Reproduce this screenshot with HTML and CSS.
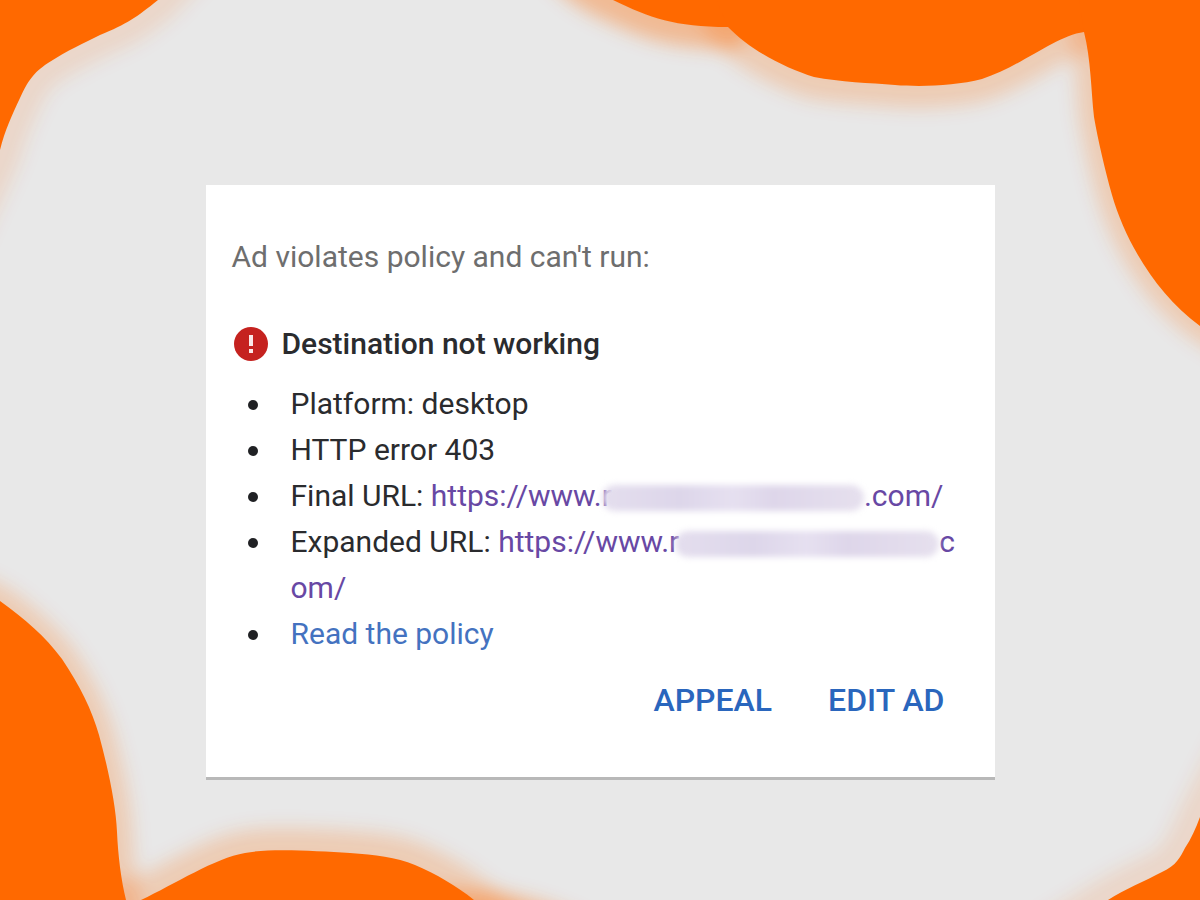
FILE: index.html
```html
<!DOCTYPE html>
<html lang="en">
<head>
    <meta charset="UTF-8">
    <meta name="viewport" content="width=device-width, initial-scale=1.0">
    <title>Ad policy violation</title>
    <link rel="stylesheet" href="styles.css">
</head>
<body>
    <svg class="backdrop" viewBox="0 0 1200 900" preserveAspectRatio="none" aria-hidden="true">
        <defs>
            <filter id="soften" filterUnits="userSpaceOnUse" x="-100" y="-100" width="1400" height="1100">
                <feGaussianBlur stdDeviation="9" />
            </filter>
            <path id="top-left" d="M-60 -60V300C-40 230 -15 190 0 150C5 130 12 115 20 98C28 81 33 73 48 63C68 50 84 43 100 35C127 24 137 17 158 0L215 -60Z" />
            <path id="top-small" d="M540 -60C575 -20 590 -10 613 0C650 18 675 27 728 27L760 -60Z" />
            <path id="top" d="M690 -60L728 27C750 50 785 68 814 77C840 82 870 83 895 85C920 87 955 86 982 79C1020 67 1055 36 1084 32L1120 -60Z" />
            <path id="right" d="M1070 -60L1084 32C1091 60 1091 90 1094 117C1098 140 1105 170 1112 195C1125 240 1155 293 1200 326L1270 370V-60Z" />
            <path id="bottom-left" d="M-60 570L0 601C25 619 45 636 62 659C80 686 92 710 99 735C108 768 116 805 117 832C118 855 121 880 126 900L140 960H-60Z" />
            <path id="bottom" d="M60 960L126 900H141C175 884 215 858 245 853C270 848 315 851 350 853C375 855 396 857 415 865C436 874 457 886 474 900L550 960Z" />
            <path id="bottom-right" d="M1010 960L1108 900C1125 889 1145 881 1162 872C1176 866 1181 856 1185 848C1191 839 1196 828 1200 817L1260 700V960Z" />
        </defs>
        <g class="glow" filter="url(#soften)">
            <use class="glow-light" href="#top-left" />
            <use class="glow-strong" href="#top-small" />
            <use href="#top" />
            <use class="glow-narrow" href="#right" />
            <use class="glow-narrow" href="#bottom-left" />
            <use href="#bottom" />
            <path class="glow-strong" d="M440 912C500 908 560 925 610 960H440Z" />
            <use class="glow-light" href="#bottom-right" />
        </g>
        <g class="shapes">
            <use href="#top-left" />
            <use href="#top-small" />
            <use href="#top" />
            <use href="#right" />
            <use href="#bottom-left" />
            <use href="#bottom" />
            <use href="#bottom-right" />
        </g>
    </svg>

    <main class="card">
        <p class="intro">Ad violates policy and can't run:</p>

        <h1 class="title">
            <svg class="error-icon" viewBox="0 0 34 34" aria-hidden="true">
                <circle cx="17" cy="17" r="17" fill="#c5221f" />
                <path d="M15 8h4v11h-4zM15 22h4v4h-4z" fill="#fbe9e8" />
            </svg>
            Destination not working
        </h1>

        <ul class="details">
            <li>Platform: desktop</li>
            <li>HTTP error 403</li>
            <li>Final URL: <a class="visited" href="#">https://www.r<span class="redacted"></span>.com/</a></li>
            <li>Expanded URL: <a class="visited" href="#">https://www.r<span class="redacted redacted-wide"></span>com/</a></li>
            <li><a class="policy" href="#">Read the policy</a></li>
        </ul>

        <div class="actions">
            <button type="button">APPEAL</button>
            <button type="button">EDIT AD</button>
        </div>
    </main>
</body>
</html>
```
FILE: styles.css
```css
body {
    font-family: Roboto, Arial, sans-serif;
    font-size: 30px;
    line-height: 46px;
    background-color: #e8e8e8;
    color: #2a2b2e;
    display: flex;
    justify-content: center;
    align-items: center;
    min-height: 100vh;
    margin: 0;
    padding: 64px 20px 0;
    box-sizing: border-box;
}

.backdrop {
    position: fixed;
    inset: 0;
    width: 100%;
    height: 100%;
    z-index: -1;
}

.shapes {
    fill: #ff6900;
}

.glow {
    fill: #ff6900;
    stroke: #ff6900;
    stroke-width: 44px;
    stroke-linejoin: round;
}

.glow > * {
    opacity: 0.22;
}

.glow .glow-light {
    opacity: 0.13;
}

.glow .glow-strong {
    opacity: 0.36;
}

.glow .glow-narrow {
    stroke-width: 30px;
}

.card {
    background-color: #ffffff;
    width: 100%;
    max-width: 789px;
    padding: 49px 26px 54px;
    border-bottom: 3px solid #b8b8b8;
    box-sizing: border-box;
}

.intro {
    margin: 0 0 41px;
    color: #6e6e6e;
}

.title {
    display: flex;
    align-items: center;
    gap: 14px;
    margin: 0 0 14px;
    padding-left: 2px;
    font-size: 30px;
    font-weight: 500;
}

.error-icon {
    width: 34px;
    height: 34px;
}

.details {
    list-style: none;
    margin: 0;
    padding: 0;
}

.details li {
    position: relative;
    padding-left: 59px;
    word-break: break-all;
}

/* Bullet in the left gutter */
.details li::before {
    content: "";
    position: absolute;
    left: 16px;
    top: 19px;
    width: 10px;
    height: 10px;
    border-radius: 50%;
    background-color: #202124;
}

.details a {
    text-decoration: none;
}

.visited {
    color: #6848a4;
}

.policy {
    color: #4472c0;
}

/* Smudge that hides the domain name */
.redacted {
    display: inline-block;
    width: 262px;
    height: 26px;
    margin-left: -10px;
    border-radius: 13px;
    vertical-align: middle;
    background: linear-gradient(90deg, #e4deee, #ddd6ea 30%, #e6e0f0 50%, #ded6ea 65%, #e6e0ee);
    filter: blur(3px);
}

.redacted-wide {
    width: 264px;
    margin-left: -4px;
}

.actions {
    display: flex;
    justify-content: flex-end;
    gap: 56px;
    margin-top: 20px;
    padding-right: 24px;
}

.actions button {
    padding: 0;
    border: none;
    background: none;
    color: #2a66bd;
    font: inherit;
    font-size: 32px;
    font-weight: 500;
    cursor: pointer;
}
```
